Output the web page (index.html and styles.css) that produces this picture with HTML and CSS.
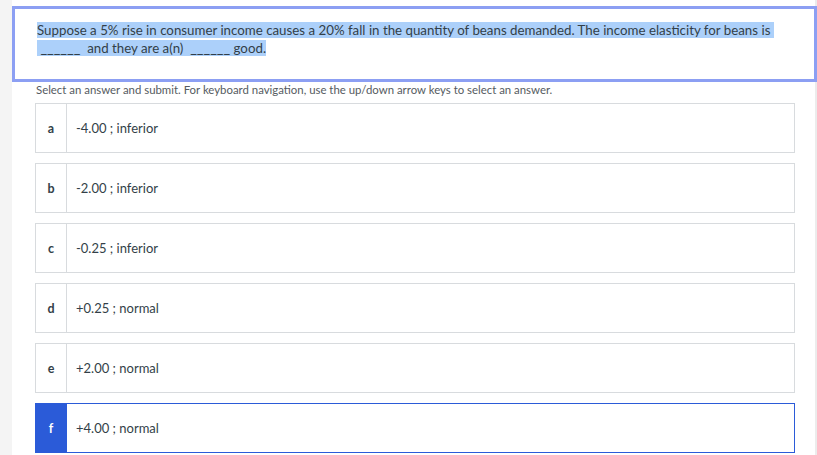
FILE: index.html
```html
<!DOCTYPE html>
<html lang="en">
<head>
    <meta charset="UTF-8">
    <title>Question</title>
    <link rel="stylesheet" href="styles.css">
</head>
<body>
    <div class="page">
        <div class="side-strip"></div>
        <div class="main">
            <div class="question-box">
                <p class="question"><span class="highlight">Suppose a 5% rise in consumer income causes a 20% fall in the quantity of beans demanded. The income elasticity for beans is&nbsp;<br>&nbsp;<span class="blank">______</span> &nbsp;and they are a(n) &nbsp;<span class="blank">______</span> good.</span></p>
            </div>
            <p class="hint">Select an answer and submit. For keyboard navigation, use the up/down arrow keys to select an answer.</p>

            <ul class="answers">
                <li class="answer"><span class="letter">a</span><span class="label">-4.00 ; inferior</span></li>
                <li class="answer"><span class="letter">b</span><span class="label">-2.00 ; inferior</span></li>
                <li class="answer"><span class="letter">c</span><span class="label">-0.25 ; inferior</span></li>
                <li class="answer"><span class="letter">d</span><span class="label">+0.25 ; normal</span></li>
                <li class="answer"><span class="letter">e</span><span class="label">+2.00 ; normal</span></li>
                <li class="answer selected"><span class="letter">f</span><span class="label">+4.00 ; normal</span></li>
            </ul>
        </div>
    </div>
</body>
</html>
```

FILE: styles.css
```css
body {
    margin: 0;
    font-family: Lato, "Open Sans", sans-serif;
    color: #333f48;
    background-color: white;
}
.page {
    display: flex;
    min-height: 455px;
}
.side-strip {
    width: 12px;
    flex-shrink: 0;
    background-color: #f4f4f4;
}
.main {
    flex: 1;
    padding-top: 6px;
    border-right: 2px solid #ececec;
}
.question-box {
    border: 3px solid #8c9ff3;
    margin-right: -2px;
    padding: 13px 22px 22px 22px;
}
.question {
    margin: 0;
    font-size: 13.3px;
    line-height: 17px;
}
.highlight {
    background-color: #acd0fa;
}
.blank {
    display: inline-block;
    font-size: 14.5px;
}
.hint {
    margin: 1px 0 0 24px;
    font-size: 11.4px;
    line-height: 14px;
    color: #555b61;
}
.answers {
    list-style-type: none;
    padding: 0;
    margin: 6px 0 0 23px;
    width: 760px;
}
.answer {
    display: flex;
    height: 48px;
    border: 1px solid #d8dbde;
    margin-bottom: 10px;
    font-size: 13px;
}
.answer .letter {
    width: 30px;
    flex-shrink: 0;
    border-right: 1px solid #d8dbde;
    display: flex;
    align-items: center;
    justify-content: center;
    font-weight: bold;
    font-size: 12.5px;
}
.answer .label {
    display: flex;
    align-items: center;
    padding-left: 9px;
}
.answer.selected {
    border-color: #2b5bd8;
}
.answer.selected .letter {
    background-color: #2b5bd8;
    border-right-color: #2b5bd8;
    color: white;
}
```
